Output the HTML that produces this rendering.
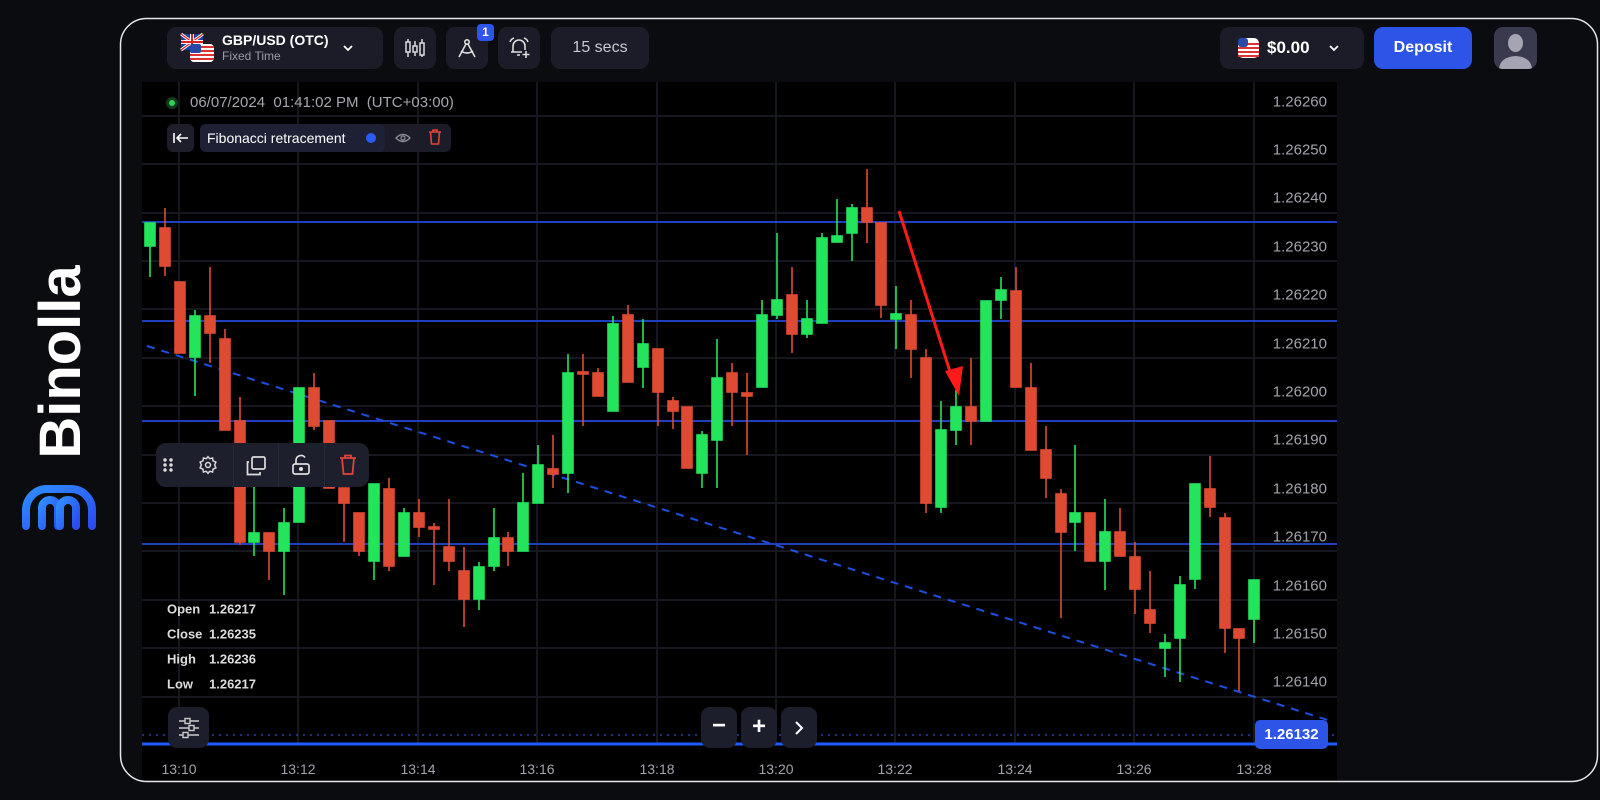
<!DOCTYPE html>
<html><head><meta charset="utf-8"><style>
*{margin:0;padding:0;box-sizing:border-box}
body{width:1600px;height:800px;background:#0b0c10;overflow:hidden;position:relative;font-family:"Liberation Sans",sans-serif;color:#fff}
.abs{position:absolute}
.btn{position:absolute;background:#1b1c27;border-radius:9px}
.pl{position:absolute;right:273px;font-size:15px;color:#a3a3ad;transform:translateY(-50%)}
.tl{position:absolute;top:761px;font-size:14px;color:#a3a3ad;transform:translateX(-50%)}
.ohlc{position:absolute;left:167px;font-size:13px;font-weight:bold;color:#ddd;transform:translateY(-50%)}
.ohlc span{position:absolute;left:42px}
</style></head><body>
<svg class="abs" style="left:0;top:0" width="1600" height="800" viewBox="0 0 1600 800">
<defs><linearGradient id="lg" x1="0" y1="0" x2="1" y2="1"><stop offset="0" stop-color="#2f8cff"/><stop offset="1" stop-color="#2a4cf0"/></linearGradient>
<clipPath id="cp"><rect x="142" y="82" width="1195" height="698"/></clipPath></defs>
<rect x="120.5" y="18.5" width="1477" height="763" rx="26" fill="#0b0c10" stroke="#e6e6e6" stroke-width="1.5"/>
<rect x="142" y="82" width="1195" height="698" fill="#000"/>
<g clip-path="url(#cp)">
<g stroke="#17171f" stroke-width="2">
<line x1="142" x2="1337" y1="116" y2="116"/><line x1="142" x2="1337" y1="164" y2="164"/><line x1="142" x2="1337" y1="213" y2="213"/><line x1="142" x2="1337" y1="261" y2="261"/><line x1="142" x2="1337" y1="309" y2="309"/><line x1="142" x2="1337" y1="358" y2="358"/><line x1="142" x2="1337" y1="406" y2="406"/><line x1="142" x2="1337" y1="455" y2="455"/><line x1="142" x2="1337" y1="503" y2="503"/><line x1="142" x2="1337" y1="551" y2="551"/><line x1="142" x2="1337" y1="600" y2="600"/><line x1="142" x2="1337" y1="648" y2="648"/><line x1="142" x2="1337" y1="697" y2="697"/>
<line y1="82" y2="745" x1="179" x2="179"/><line y1="82" y2="745" x1="298" x2="298"/><line y1="82" y2="745" x1="418" x2="418"/><line y1="82" y2="745" x1="537" x2="537"/><line y1="82" y2="745" x1="657" x2="657"/><line y1="82" y2="745" x1="776" x2="776"/><line y1="82" y2="745" x1="895" x2="895"/><line y1="82" y2="745" x1="1015" x2="1015"/><line y1="82" y2="745" x1="1134" x2="1134"/><line y1="82" y2="745" x1="1254" x2="1254"/>
</g>
<g stroke="#1f3fbf" stroke-width="2"><line x1="142" x2="1337" y1="222" y2="222"/><line x1="142" x2="1337" y1="321" y2="321"/><line x1="142" x2="1337" y1="421" y2="421"/><line x1="142" x2="1337" y1="544" y2="544"/></g>
<line x1="142" x2="1337" y1="735" y2="735" stroke="#2a44a0" stroke-width="1.5" stroke-dasharray="2 5"/>
<line x1="142" x2="1337" y1="744" y2="744" stroke="#1f5cff" stroke-width="3"/>
<line x1="147" y1="346" x2="1334" y2="722" stroke="#1d4fe0" stroke-width="2" stroke-dasharray="8 7"/>
<g id="c" stroke-width="1.6">
<g stroke="#23e45a" fill="#23e45a">
<line x1="150" x2="150" y1="223" y2="277"/><rect x="145" y="223" width="10" height="23"/>
<line x1="195" x2="195" y1="310" y2="396"/><rect x="190" y="316" width="10" height="41"/>
<line x1="254" x2="254" y1="480" y2="556"/><rect x="249" y="533" width="10" height="9"/>
<line x1="284" x2="284" y1="508" y2="595"/><rect x="279" y="523" width="10" height="28"/>
<rect x="294" y="388" width="10" height="134"/>
<line x1="374" x2="374" y1="484" y2="580"/><rect x="369" y="484" width="10" height="77"/>
<line x1="404" x2="404" y1="508" y2="556"/><rect x="399" y="513" width="10" height="43"/>
<line x1="479" x2="479" y1="562" y2="610"/><rect x="474" y="567" width="10" height="32"/>
<line x1="494" x2="494" y1="508" y2="571"/><rect x="489" y="538" width="10" height="28"/>
<line x1="523" x2="523" y1="473" y2="551"/><rect x="518" y="503" width="10" height="48"/>
<line x1="538" x2="538" y1="445" y2="503"/><rect x="533" y="465" width="10" height="38"/>
<line x1="568" x2="568" y1="354" y2="493"/><rect x="563" y="373" width="10" height="100"/>
<line x1="613" x2="613" y1="316" y2="411"/><rect x="608" y="324" width="10" height="87"/>
<line x1="643" x2="643" y1="319" y2="388"/><rect x="638" y="344" width="10" height="23"/>
<line x1="702" x2="702" y1="431" y2="488"/><rect x="697" y="435" width="10" height="38"/>
<line x1="717" x2="717" y1="339" y2="488"/><rect x="712" y="378" width="10" height="62"/>
<line x1="762" x2="762" y1="300" y2="387"/><rect x="757" y="315" width="10" height="72"/>
<line x1="777" x2="777" y1="233" y2="319"/><rect x="772" y="300" width="10" height="15"/>
<line x1="807" x2="807" y1="300" y2="338"/><rect x="802" y="319" width="10" height="15"/>
<line x1="822" x2="822" y1="233" y2="323"/><rect x="817" y="238" width="10" height="85"/>
<line x1="837" x2="837" y1="199" y2="242"/><rect x="832" y="236" width="10" height="6"/>
<line x1="852" x2="852" y1="204" y2="261"/><rect x="847" y="208" width="10" height="25"/>
<line x1="896" x2="896" y1="286" y2="349"/><rect x="891" y="314" width="10" height="5"/>
<line x1="941" x2="941" y1="401" y2="513"/><rect x="936" y="430" width="10" height="77"/>
<line x1="956" x2="956" y1="390" y2="445"/><rect x="951" y="407" width="10" height="23"/>
<rect x="981" y="301" width="10" height="120"/>
<line x1="1001" x2="1001" y1="277" y2="319"/><rect x="996" y="290" width="10" height="10"/>
<line x1="1075" x2="1075" y1="445" y2="551"/><rect x="1070" y="513" width="10" height="9"/>
<line x1="1105" x2="1105" y1="499" y2="590"/><rect x="1100" y="532" width="10" height="29"/>
<line x1="1165" x2="1165" y1="634" y2="677"/><rect x="1160" y="643" width="10" height="5"/>
<line x1="1180" x2="1180" y1="576" y2="682"/><rect x="1175" y="585" width="10" height="53"/>
<line x1="1195" x2="1195" y1="484" y2="589"/><rect x="1190" y="484" width="10" height="95"/>
<line x1="1254" x2="1254" y1="580" y2="643"/><rect x="1249" y="580" width="10" height="39"/>
</g>
<g stroke="#df4a33" fill="#df4a33">
<line x1="165" x2="165" y1="208" y2="276"/><rect x="160" y="228" width="10" height="38"/>
<rect x="175" y="282" width="10" height="71"/>
<line x1="210" x2="210" y1="267" y2="363"/><rect x="205" y="316" width="10" height="17"/>
<line x1="225" x2="225" y1="329" y2="430"/><rect x="220" y="339" width="10" height="91"/>
<line x1="240" x2="240" y1="397" y2="545"/><rect x="235" y="421" width="10" height="121"/>
<line x1="269" x2="269" y1="533" y2="580"/><rect x="264" y="533" width="10" height="18"/>
<line x1="314" x2="314" y1="373" y2="430"/><rect x="309" y="388" width="10" height="38"/>
<rect x="324" y="421" width="10" height="67"/>
<line x1="344" x2="344" y1="488" y2="542"/><rect x="339" y="488" width="10" height="15"/>
<line x1="359" x2="359" y1="513" y2="556"/><rect x="354" y="513" width="10" height="38"/>
<line x1="389" x2="389" y1="478" y2="571"/><rect x="384" y="489" width="10" height="77"/>
<line x1="419" x2="419" y1="499" y2="537"/><rect x="414" y="513" width="10" height="14"/>
<line x1="434" x2="434" y1="523" y2="585"/><rect x="429" y="527" width="10" height="2"/>
<line x1="449" x2="449" y1="499" y2="571"/><rect x="444" y="547" width="10" height="14"/>
<line x1="464" x2="464" y1="547" y2="627"/><rect x="459" y="571" width="10" height="28"/>
<line x1="508" x2="508" y1="532" y2="566"/><rect x="503" y="538" width="10" height="13"/>
<line x1="553" x2="553" y1="435" y2="488"/><rect x="548" y="469" width="10" height="5"/>
<line x1="583" x2="583" y1="354" y2="426"/><rect x="578" y="372" width="10" height="2"/>
<line x1="598" x2="598" y1="368" y2="396"/><rect x="593" y="373" width="10" height="23"/>
<line x1="628" x2="628" y1="305" y2="382"/><rect x="623" y="315" width="10" height="67"/>
<line x1="658" x2="658" y1="349" y2="426"/><rect x="653" y="349" width="10" height="43"/>
<line x1="673" x2="673" y1="397" y2="429"/><rect x="668" y="401" width="10" height="10"/>
<rect x="682" y="407" width="10" height="61"/>
<line x1="732" x2="732" y1="363" y2="426"/><rect x="727" y="373" width="10" height="19"/>
<line x1="747" x2="747" y1="373" y2="455"/><rect x="742" y="393" width="10" height="3"/>
<line x1="792" x2="792" y1="267" y2="353"/><rect x="787" y="295" width="10" height="39"/>
<line x1="867" x2="867" y1="169" y2="243"/><rect x="862" y="208" width="10" height="14"/>
<line x1="881" x2="881" y1="223" y2="318"/><rect x="876" y="223" width="10" height="82"/>
<line x1="911" x2="911" y1="300" y2="378"/><rect x="906" y="315" width="10" height="34"/>
<line x1="926" x2="926" y1="349" y2="513"/><rect x="921" y="358" width="10" height="145"/>
<line x1="971" x2="971" y1="358" y2="445"/><rect x="966" y="407" width="10" height="14"/>
<line x1="1016" x2="1016" y1="267" y2="387"/><rect x="1011" y="291" width="10" height="96"/>
<line x1="1031" x2="1031" y1="363" y2="450"/><rect x="1026" y="388" width="10" height="62"/>
<line x1="1046" x2="1046" y1="426" y2="498"/><rect x="1041" y="450" width="10" height="28"/>
<line x1="1061" x2="1061" y1="489" y2="618"/><rect x="1056" y="494" width="10" height="38"/>
<rect x="1085" y="513" width="10" height="48"/>
<line x1="1120" x2="1120" y1="508" y2="556"/><rect x="1115" y="532" width="10" height="24"/>
<line x1="1135" x2="1135" y1="542" y2="614"/><rect x="1130" y="557" width="10" height="32"/>
<line x1="1150" x2="1150" y1="571" y2="633"/><rect x="1145" y="610" width="10" height="13"/>
<line x1="1210" x2="1210" y1="456" y2="517"/><rect x="1205" y="489" width="10" height="18"/>
<line x1="1225" x2="1225" y1="513" y2="653"/><rect x="1220" y="518" width="10" height="110"/>
<line x1="1239" x2="1239" y1="629" y2="691"/><rect x="1234" y="629" width="10" height="9"/>
</g></g>
<line x1="899" y1="211" x2="952" y2="378" stroke="#ff1a1a" stroke-width="3"/>
<polygon points="959,396 945,371 963,366" fill="#ff1a1a"/>
</g>
<text x="0" y="0" transform="translate(80,362) rotate(-90)" text-anchor="middle" font-family="Liberation Sans, sans-serif" font-weight="bold" font-size="58" fill="#fff">Binolla</text>
<g fill="none" stroke="url(#lg)" stroke-width="8" stroke-linecap="round">
<path d="M26 526 V510 A21 21 0 0 1 47 489 H71 A21 21 0 0 1 92 510 V526"/>
<path d="M42 526 V508 A8 8 0 0 1 58 508 V526"/>
<path d="M60 526 V508 A8 8 0 0 1 76 508 V526"/>
</g>
</svg>

<div class="btn" style="left:167px;top:27px;width:216px;height:42px">
<svg class="abs" style="left:13px;top:6px" width="36" height="30" viewBox="0 0 36 30">
<rect x="1" y="1" width="22" height="16" rx="4" fill="#1b3f9a"/><path d="M1 1L23 17M23 1L1 17" stroke="#fff" stroke-width="3"/><path d="M1 1L23 17M23 1L1 17" stroke="#d22" stroke-width="1.2"/><path d="M12 1V17M1 9H23" stroke="#fff" stroke-width="4"/><path d="M12 1V17M1 9H23" stroke="#d22" stroke-width="2"/>
<rect x="10" y="11" width="24" height="18" rx="4" fill="#fff"/><path d="M10 14H34M10 18H34M10 22H34M10 26H34" stroke="#e03131" stroke-width="2"/><rect x="10" y="11" width="11" height="9" rx="2" fill="#2848a8"/>
</svg>
<div class="abs" style="left:55px;top:5px;font-size:14px;font-weight:bold">GBP/USD (OTC)</div>
<div class="abs" style="left:55px;top:22px;font-size:12px;color:#9a9aa6">Fixed Time</div>
<svg class="abs" style="left:175px;top:16px" width="12" height="10"><path d="M2 3L6 7L10 3" stroke="#fff" stroke-width="1.8" fill="none"/></svg>
</div>
<div class="btn" style="left:394px;top:27px;width:42px;height:42px">
<svg class="abs" style="left:9px;top:9px" width="24" height="24" viewBox="0 0 24 24" fill="none" stroke="#ddd" stroke-width="1.5"><rect x="3" y="6" width="4" height="10"/><path d="M5 3V6M5 16V21"/><rect x="10" y="10" width="4" height="6"/><path d="M12 5V10M12 16V20"/><rect x="17" y="7" width="4" height="12"/><path d="M19 3V7M19 19V21"/></svg></div>
<div class="btn" style="left:446px;top:27px;width:42px;height:42px">
<svg class="abs" style="left:9px;top:9px" width="24" height="24" viewBox="0 0 24 24" fill="none" stroke="#ddd" stroke-width="1.6"><circle cx="12" cy="6" r="2.2"/><path d="M11 8L4 21M13 8L20 21M6 15Q12 19 18 15"/></svg></div>
<div class="abs" style="left:477px;top:24px;width:17px;height:17px;background:#2f54eb;border-radius:4px;font-size:12px;font-weight:bold;text-align:center;line-height:17px">1</div>
<div class="btn" style="left:498px;top:27px;width:42px;height:42px">
<svg class="abs" style="left:9px;top:8px" width="26" height="26" viewBox="0 0 26 26" fill="none" stroke="#ddd" stroke-width="1.6"><path d="M6 17V11A6 6 0 0 1 18 11V15M4 17H15M10 20H13"/><path d="M3 7Q4 4 7 3M21 7Q20 4 17 3"/><path d="M19 16V23M15.5 19.5H22.5"/></svg></div>
<div class="btn" style="left:551px;top:27px;width:98px;height:42px;font-size:16px;color:#c8c8d0;text-align:center;line-height:42px">15 secs</div>

<div class="btn" style="left:1220px;top:27px;width:144px;height:42px">
<svg class="abs" style="left:18px;top:11px" width="21" height="20" viewBox="0 0 21 20"><rect width="21" height="20" rx="5" fill="#fff"/><path d="M0 6H21M0 10H21M0 14H21M0 18H21" stroke="#e03131" stroke-width="2"/><rect width="10" height="9" rx="3" fill="#2848a8"/></svg>
<div class="abs" style="left:47px;top:11px;font-size:17px;font-weight:bold">$0.00</div>
<svg class="abs" style="left:108px;top:16px" width="12" height="10"><path d="M2 3L6 7L10 3" stroke="#fff" stroke-width="1.8" fill="none"/></svg>
</div>
<div class="abs" style="left:1374px;top:27px;width:98px;height:42px;background:#2c54e6;border-radius:9px;font-size:16px;font-weight:bold;text-align:center;line-height:42px">Deposit</div>
<div class="abs" style="left:1494px;top:27px;width:43px;height:42px;background:#393a4d;border-radius:9px;overflow:hidden">
<svg width="43" height="42" viewBox="0 0 43 42"><ellipse cx="21.5" cy="16" rx="7.5" ry="9" fill="#a4a4b2"/><path d="M5 42Q6 30 21.5 29Q37 30 38 42Z" fill="#a4a4b2"/></svg></div>

<div class="abs" style="left:166px;top:97px;width:12px;height:12px;border-radius:6px;background:#143a1c"></div>
<div class="abs" style="left:169px;top:100px;width:6px;height:6px;border-radius:3px;background:#2ad454"></div>
<div class="abs" style="left:190px;top:94px;font-size:15px;color:#a6a6b0">06/07/2024&nbsp; 01:41:02 PM&nbsp; (UTC+03:00)</div>

<div class="btn" style="left:167px;top:124px;width:27px;height:28px;border-radius:6px;background:#1d1e2a">
<svg class="abs" style="left:5px;top:8px" width="17" height="12"><path d="M2 1V11M16 6H5M9 2L5 6L9 10" stroke="#fff" stroke-width="1.6" fill="none"/></svg></div>
<div class="abs" style="left:200px;top:124px;width:251px;height:28px;border-radius:6px;background:#1b1c27"></div>
<div class="abs" style="left:200px;top:124px;width:185px;height:28px;border-radius:6px;background:#1e2135;font-size:14px;line-height:28px;padding-left:7px">Fibonacci retracement</div>
<div class="abs" style="left:366px;top:133px;width:10px;height:10px;border-radius:5px;background:#2a5cf5"></div>
<svg class="abs" style="left:395px;top:130px" width="16" height="16" viewBox="0 0 16 16" fill="none" stroke="#8c8c98" stroke-width="1.3"><path d="M1 8Q8 1 15 8Q8 15 1 8Z"/><circle cx="8" cy="8" r="2"/></svg>
<svg class="abs" style="left:427px;top:128px" width="16" height="18" viewBox="0 0 16 18" fill="none" stroke="#e0433a" stroke-width="1.6"><path d="M2 4H14M6 4V2H10V4M3.5 4L4.5 16H11.5L12.5 4"/></svg>

<div class="abs" style="left:156px;top:443px;width:213px;height:44px;background:#1e1f2d;border-radius:10px"></div>
<div class="abs" style="left:233px;top:443px;width:1px;height:44px;background:#2a2b3a"></div>
<div class="abs" style="left:278px;top:443px;width:1px;height:44px;background:#2a2b3a"></div>
<div class="abs" style="left:324px;top:443px;width:1px;height:44px;background:#2a2b3a"></div>
<svg class="abs" style="left:162px;top:457px" width="14" height="16" fill="#ddd"><circle cx="3" cy="3" r="1.7"/><circle cx="9" cy="3" r="1.7"/><circle cx="3" cy="8" r="1.7"/><circle cx="9" cy="8" r="1.7"/><circle cx="3" cy="13" r="1.7"/><circle cx="9" cy="13" r="1.7"/></svg>
<svg class="abs" style="left:198px;top:455px" width="20" height="20" viewBox="0 0 24 24" fill="none" stroke="#ddd" stroke-width="1.7"><circle cx="12" cy="12" r="3"/><path d="M12 2L14 4.5L17.5 3.5L18 7L21.5 8.5L20 12L21.5 15.5L18 17L17.5 20.5L14 19.5L12 22L10 19.5L6.5 20.5L6 17L2.5 15.5L4 12L2.5 8.5L6 7L6.5 3.5L10 4.5Z"/></svg>
<svg class="abs" style="left:245px;top:455px" width="22" height="22" viewBox="0 0 22 22" fill="none" stroke="#ddd" stroke-width="1.7"><rect x="7" y="2" width="13" height="12" rx="1.5"/><path d="M4 7H2.5V19.5H15V17"/></svg>
<svg class="abs" style="left:291px;top:454px" width="20" height="22" viewBox="0 0 20 22" fill="none" stroke="#ddd" stroke-width="1.7"><rect x="2" y="10" width="16" height="10" rx="2"/><path d="M5 10V6A5 5 0 0 1 14 3.5"/><circle cx="10" cy="15" r="1.2" fill="#ddd"/></svg>
<svg class="abs" style="left:338px;top:453px" width="20" height="24" viewBox="0 0 20 24" fill="none" stroke="#e0433a" stroke-width="1.8"><path d="M2 5H18M7 5V2.5H13V5M4 5L5.5 21H14.5L16 5"/></svg>

<div class="pl" style="top:102px">1.26260</div><div class="pl" style="top:150px">1.26250</div><div class="pl" style="top:198px">1.26240</div><div class="pl" style="top:247px">1.26230</div><div class="pl" style="top:295px">1.26220</div><div class="pl" style="top:344px">1.26210</div><div class="pl" style="top:392px">1.26200</div><div class="pl" style="top:440px">1.26190</div><div class="pl" style="top:489px">1.26180</div><div class="pl" style="top:537px">1.26170</div><div class="pl" style="top:586px">1.26160</div><div class="pl" style="top:634px">1.26150</div><div class="pl" style="top:682px">1.26140</div>
<div class="abs" style="left:1255px;top:720px;width:73px;height:29px;background:#2c54e6;border-radius:5px;font-size:15px;font-weight:bold;text-align:center;line-height:29px">1.26132</div>

<div class="ohlc" style="top:609px">Open<span>1.26217</span></div>
<div class="ohlc" style="top:634px">Close<span>1.26235</span></div>
<div class="ohlc" style="top:659px">High<span>1.26236</span></div>
<div class="ohlc" style="top:684px">Low<span>1.26217</span></div>

<div class="btn" style="left:168px;top:707px;width:41px;height:41px;background:#1d1e2b">
<svg class="abs" style="left:10px;top:10px" width="22" height="22" viewBox="0 0 22 22" fill="none" stroke="#ccc" stroke-width="1.4"><path d="M1 4H21M1 11H21M1 18H21"/><rect x="7" y="1.5" width="5" height="5" fill="#1d1e2b"/><rect x="11" y="8.5" width="5" height="5" fill="#1d1e2b"/><rect x="5" y="15.5" width="5" height="5" fill="#1d1e2b"/></svg></div>

<div class="btn" style="left:701px;top:707px;width:36px;height:41px;background:#1d1e2b;font-size:24px;font-weight:bold;text-align:center;line-height:38px">−</div>
<div class="btn" style="left:741px;top:707px;width:36px;height:41px;background:#1d1e2b;font-size:24px;font-weight:bold;text-align:center;line-height:40px">+</div>
<div class="btn" style="left:781px;top:707px;width:36px;height:41px;background:#1d1e2b">
<svg class="abs" style="left:13px;top:14px" width="10" height="14"><path d="M2 1L8 7L2 13" stroke="#fff" stroke-width="2" fill="none"/></svg></div>

<div class="tl" style="left:179px">13:10</div><div class="tl" style="left:298px">13:12</div><div class="tl" style="left:418px">13:14</div><div class="tl" style="left:537px">13:16</div><div class="tl" style="left:657px">13:18</div><div class="tl" style="left:776px">13:20</div><div class="tl" style="left:895px">13:22</div><div class="tl" style="left:1015px">13:24</div><div class="tl" style="left:1134px">13:26</div><div class="tl" style="left:1254px">13:28</div>
</body></html>
